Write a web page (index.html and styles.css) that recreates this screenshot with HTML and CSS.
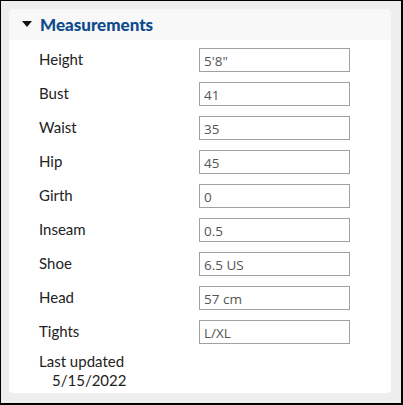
FILE: index.html
```html
<!DOCTYPE html>
<html>
<head>
<meta charset="utf-8">
<link rel="stylesheet" href="styles.css">
</head>
<body>
<div class="frame">
  <section class="panel">
    <header class="panel-head">
      <span class="caret"></span>
      <h2 class="title">Measurements</h2>
    </header>
    <div class="panel-body">
      <label class="lbl">Height</label><input class="fld" value="5'8&quot;">
      <label class="lbl">Bust</label><input class="fld" value="41">
      <label class="lbl">Waist</label><input class="fld" value="35">
      <label class="lbl">Hip</label><input class="fld" value="45">
      <label class="lbl">Girth</label><input class="fld" value="0">
      <label class="lbl">Inseam</label><input class="fld" value="0.5">
      <label class="lbl">Shoe</label><input class="fld" value="6.5 US">
      <label class="lbl">Head</label><input class="fld" value="57 cm">
      <label class="lbl">Tights</label><input class="fld" value="L/XL">
      <div class="updated">
        <div>Last updated</div>
        <div class="date">5/15/2022</div>
      </div>
    </div>
  </section>
</div>
</body>
</html>
```
FILE: styles.css
```css
html, body {
  margin: 0;
  padding: 0;
}
body {
  width: 403px;
  height: 405px;
  font-family: Lato, "Liberation Sans", sans-serif;
}
.frame {
  box-sizing: border-box;
  width: 403px;
  height: 405px;
  background: #eeeeee;
  border-style: solid;
  border-color: #000;
  border-width: 1px 2px 2px 1px;
  padding: 8px 10px 10px 8px;
}
.panel {
  background: #fff;
  border-radius: 6px 6px 4px 4px;
  height: 384px;
  overflow: hidden;
}
.panel-head {
  display: flex;
  align-items: center;
  height: 31px;
  background: #f8f8f8;
  padding-left: 13px;
}
.caret {
  width: 0;
  height: 0;
  border-left: 5px solid transparent;
  border-right: 5px solid transparent;
  border-top: 6px solid #111;
  margin-right: 8px;
  margin-top: -1px;
}
.title {
  margin: 0;
  font-size: 17px;
  font-weight: 900;
  color: #0d4a8c;
  line-height: 20px;
}
.panel-body {
  display: grid;
  grid-template-columns: 160px 151px;
  row-gap: 10px;
  align-items: center;
  padding: 8px 0 0 30px;
}
.lbl {
  font-size: 15px;
  color: #222;
  line-height: 18px;
  margin-top: -2px;
}
.fld {
  box-sizing: border-box;
  width: 151px;
  height: 24px;
  margin: 0;
  border: 1px solid #a0a0a0;
  border-radius: 0;
  padding: 1px 4px 0;
  font-family: "Open Sans", "DejaVu Sans", sans-serif;
  font-size: 13.5px;
  color: #555;
  background: #fff;
  outline: none;
}
.updated {
  grid-column: 1 / 3;
  font-size: 15px;
  color: #222;
  line-height: 19px;
  margin-top: -2px;
}
.date {
  padding-left: 13px;
}
```
